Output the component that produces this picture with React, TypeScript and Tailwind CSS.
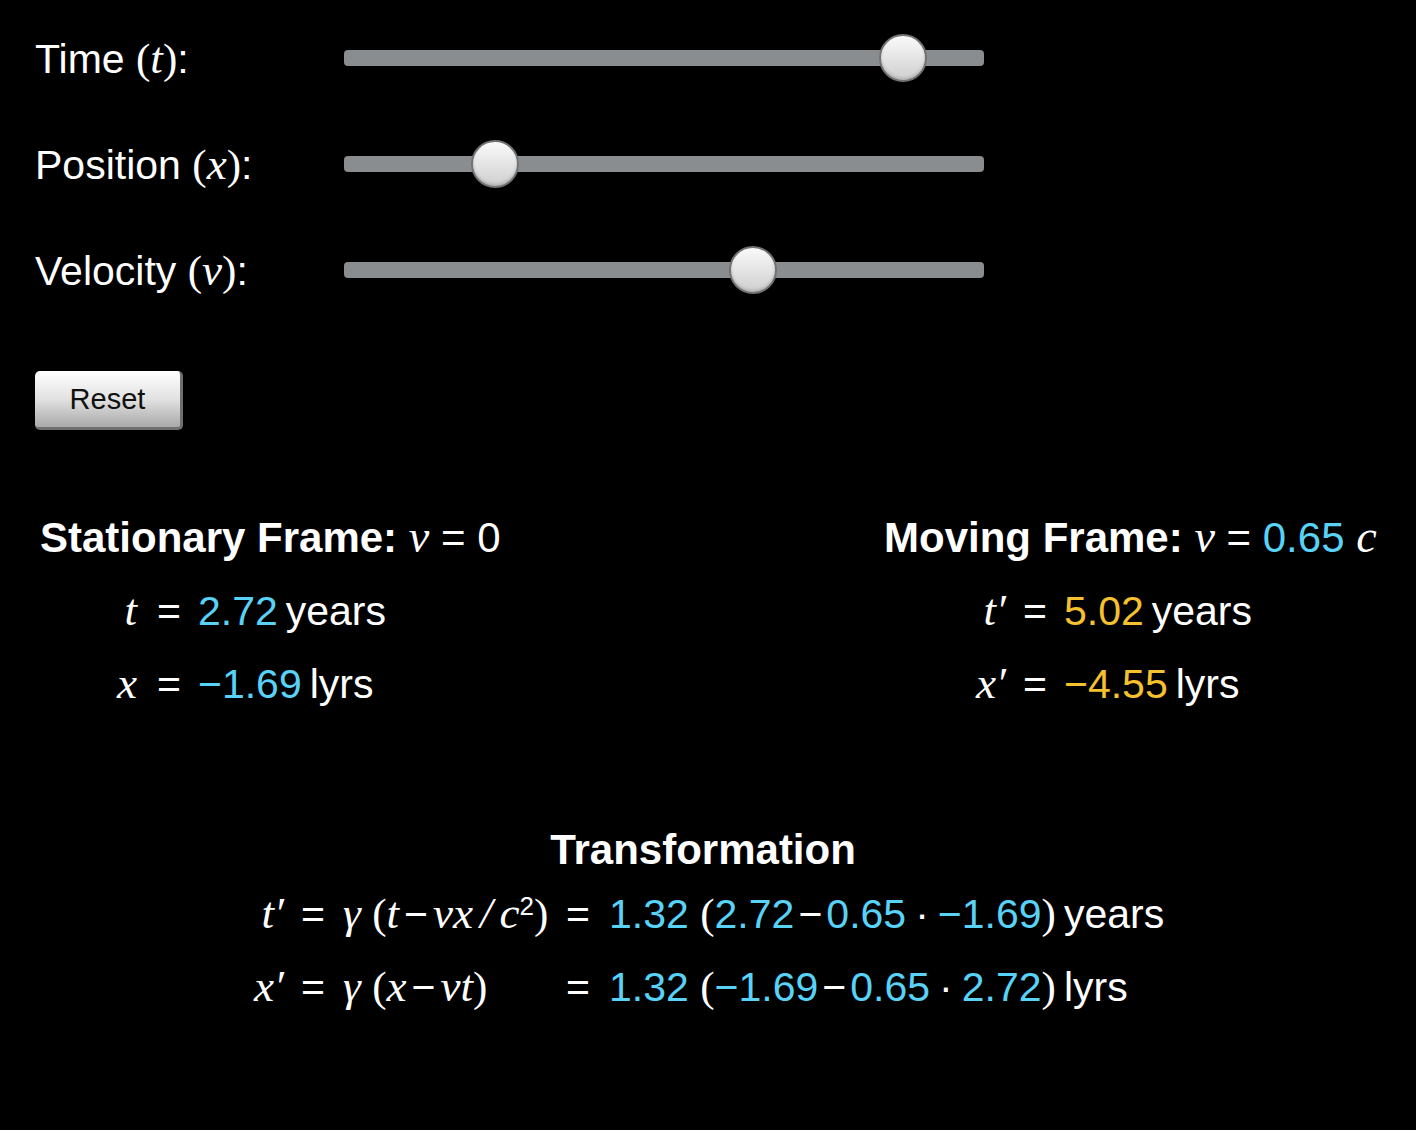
import React from "react";

const CYAN = "text-[#58d3f7]";
const GOLD = "text-[#f5c12f]";

function M({ children, className = "" }: { children: React.ReactNode; className?: string }) {
  // math italic, serif like the rendered TeX
  return <span className={`font-['Liberation_Serif',serif] italic text-[1.1em] ${className}`}>{children}</span>;
}

function P({ children }: { children: React.ReactNode }) {
  return <span className="font-['Liberation_Serif',serif] text-[1.05em]">{children}</span>;
}

const sliders = [
  { label: "Time", sym: "t", value: 2.72, min: 0, max: 3 },
  { label: "Position", sym: "x", value: -1.69, min: -3, max: 3 },
  { label: "Velocity", sym: "v", value: 0.654, min: 0, max: 1 },
];

function Slider({ value, min, max }: { value: number; min: number; max: number }) {
  const frac = (value - min) / (max - min);
  return (
    <div className="relative w-[640px] h-[48px] flex items-center">
      <div className="w-full h-[16px] rounded-[4px] bg-[#8a8d8f]" />
      <div
        className="absolute top-0 w-[48px] h-[48px] rounded-full border-2 border-[#727272] bg-gradient-to-b from-[#fafafa] to-[#cfcfcf] shadow-[inset_0_-2px_3px_rgba(0,0,0,0.15)]"
        style={{ left: `${frac * 592 - 2}px` }}
      />
    </div>
  );
}

function Row({ sym, symW, value, unit, color, gap }: { sym: React.ReactNode; symW: string; value: string; unit: string; color: string; gap: string }) {
  return (
    <div className="flex items-baseline leading-[72px] text-[41px]">
      <span className={`${symW} text-right`}>{sym}</span>
      <span className={gap}>=</span>
      <span className={`ml-[17px] ${color}`}>{value}</span>
      <span className="ml-[8px]">{unit}</span>
    </div>
  );
}

export default function App() {
  return (
    <div className="min-h-screen w-full bg-black text-white font-['Liberation_Sans',Arial,sans-serif]">
      <div className="pt-[5px] pl-[35px]">
        {sliders.map((s) => (
          <div key={s.label} className="flex items-center h-[106px]">
            <div className="w-[309px] text-[41px] leading-[48px]">
              {s.label} <P>(</P>
              <M>{s.sym}</M>
              <P>)</P>:
            </div>
            <Slider value={s.value} min={s.min} max={s.max} />
          </div>
        ))}
      </div>

      <div className="pl-[35px] mt-[48px]">
        <button className="w-[148px] h-[59px] rounded-[5px] bg-gradient-to-b from-[#ffffff] via-[#e2e2e2] to-[#a9a9a9] border-r-[3px] border-b-[3px] border-[#6e6e6e] text-[29px] text-[#111] pt-[1px]">
          Reset
        </button>
      </div>

      <div className="mt-[71px] pl-[40px] grid grid-cols-[844px_auto]">
        <div>
          <div className="text-[42px] leading-[72px]">
            <span className="font-bold">Stationary Frame:</span> <M>v</M> = 0
          </div>
          <Row sym={<M>t</M>} symW="w-[97px]" gap="ml-[20px]" value="2.72" unit="years" color={CYAN} />
          <Row sym={<M>x</M>} symW="w-[97px]" gap="ml-[20px]" value="−1.69" unit="lyrs" color={CYAN} />
        </div>
        <div>
          <div className="text-[42px] leading-[72px]">
            <span className="font-bold">Moving Frame:</span> <M>v</M> = <span className={CYAN}>0.65</span> <M>c</M>
          </div>
          <Row sym={<M>t′</M>} symW="w-[122px]" gap="ml-[17px]" value="5.02" unit="years" color={GOLD} />
          <Row sym={<M>x′</M>} symW="w-[122px]" gap="ml-[17px]" value="−4.55" unit="lyrs" color={GOLD} />
        </div>
      </div>

      <div className="mt-[103px]">
        <div className="text-center text-[42px] leading-[54px] font-bold pr-[10px]">Transformation</div>
        <div className="ml-[240px] grid grid-cols-[52px_42px_222px_44px_auto] text-[41px] leading-[72px] items-baseline">
          <span className="text-right pr-[8px]"><M>t′</M></span>
          <span className="text-center">=</span>
          <span className="pl-[9px]">
            <M>γ</M> <P>(</P>
            <M>t</M>
            <span className="mx-[5px]">−</span>
            <M>vx</M>
            <M className="mx-[7px]">/</M>
            <M>c</M>
            <sup className="text-[26px]">2</sup>
            <P>)</P>
          </span>
          <span className="text-center">=</span>
          <span className="pl-[9px]">
            <span className={CYAN}>1.32</span> <P>(</P>
            <span className={CYAN}>2.72</span>
            <span className="mx-[4px]">−</span>
            <span className={CYAN}>0.65</span>
            <span className="mx-[9px]">·</span>
            <span className={CYAN}>−1.69</span>
            <P>)</P>
            <span className="ml-[8px]">years</span>
          </span>

          <span className="text-right pr-[8px]"><M>x′</M></span>
          <span className="text-center">=</span>
          <span className="pl-[9px]">
            <M>γ</M> <P>(</P>
            <M>x</M>
            <span className="mx-[5px]">−</span>
            <M>vt</M>
            <P>)</P>
          </span>
          <span className="text-center">=</span>
          <span className="pl-[9px]">
            <span className={CYAN}>1.32</span> <P>(</P>
            <span className={CYAN}>−1.69</span>
            <span className="mx-[4px]">−</span>
            <span className={CYAN}>0.65</span>
            <span className="mx-[9px]">·</span>
            <span className={CYAN}>2.72</span>
            <P>)</P>
            <span className="ml-[8px]">lyrs</span>
          </span>
        </div>
      </div>
    </div>
  );
}
